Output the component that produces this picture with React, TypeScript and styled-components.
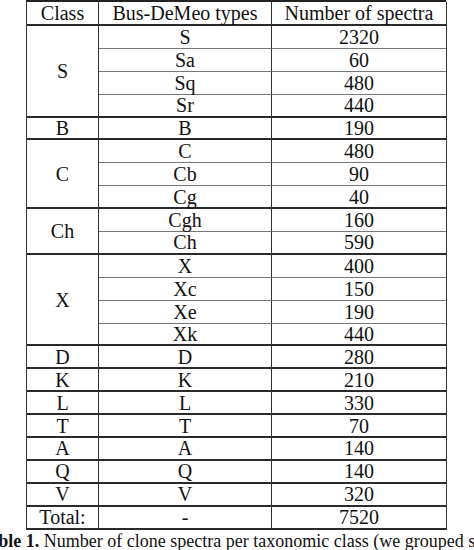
import React from "react";
import styled, { createGlobalStyle } from "styled-components";

const GlobalStyle = createGlobalStyle`
  html, body {
    margin: 0;
    padding: 0;
    background: #fff;
    overflow: hidden;
  }
  body {
    font-family: "Liberation Serif", "Times New Roman", serif;
    color: #111;
  }
`;

type Row = [string, string];
type Group = { cls: string; rows: Row[] };

const groups: Group[] = [
  { cls: "S", rows: [["S", "2320"], ["Sa", "60"], ["Sq", "480"], ["Sr", "440"]] },
  { cls: "B", rows: [["B", "190"]] },
  { cls: "C", rows: [["C", "480"], ["Cb", "90"], ["Cg", "40"]] },
  { cls: "Ch", rows: [["Cgh", "160"], ["Ch", "590"]] },
  { cls: "X", rows: [["X", "400"], ["Xc", "150"], ["Xe", "190"], ["Xk", "440"]] },
  { cls: "D", rows: [["D", "280"]] },
  { cls: "K", rows: [["K", "210"]] },
  { cls: "L", rows: [["L", "330"]] },
  { cls: "T", rows: [["T", "70"]] },
  { cls: "A", rows: [["A", "140"]] },
  { cls: "Q", rows: [["Q", "140"]] },
  { cls: "V", rows: [["V", "320"]] },
  { cls: "Total:", rows: [["-", "7520"]] },
];

const Page = styled.div`
  width: 474px;
  height: 550px;
  overflow: hidden;
`;

const Grid = styled.div`
  margin-left: 26px;
  width: 420px;
  display: grid;
  grid-template-columns: 72px 173px 175px;
  grid-template-rows: 24px;
  grid-auto-rows: 22.9px;
  border-top: 2px solid #222;
  border-left: 1px solid #333;
  box-sizing: border-box;
`;

const Cell = styled.div<{ $span?: number; $inner?: boolean }>`
  grid-row: span ${(p) => p.$span ?? 1};
  display: flex;
  align-items: center;
  justify-content: center;
  box-sizing: border-box;
  border-right: 1px solid #333;
  border-bottom: ${(p) => (p.$inner ? "1px solid #777" : "2px solid #2a2a2a")};
  font-size: 20px;
  line-height: 20px;
  white-space: nowrap;
`;

const Caption = styled.p`
  margin: 1px 0 0 -21px;
  white-space: nowrap;
  font-size: 18px;
  line-height: 20px;
`;

const Label = styled.b`
  font-weight: bold;
`;

export default function App() {
  return (
    <Page>
      <GlobalStyle />
      <Grid>
        <Cell>Class</Cell>
        <Cell>Bus-DeMeo types</Cell>
        <Cell>Number of spectra</Cell>
        {groups.map((g) => (
          <React.Fragment key={g.cls}>
            <Cell $span={g.rows.length}>{g.cls}</Cell>
            {g.rows.map(([type, count], i) => {
              const inner = i < g.rows.length - 1;
              return (
                <React.Fragment key={type + i}>
                  <Cell $inner={inner}>{type}</Cell>
                  <Cell $inner={inner}>{count}</Cell>
                </React.Fragment>
              );
            })}
          </React.Fragment>
        ))}
      </Grid>
      <Caption>
        <Label>Table 1.</Label> Number of clone spectra per taxonomic class (we grouped similar
      </Caption>
    </Page>
  );
}
